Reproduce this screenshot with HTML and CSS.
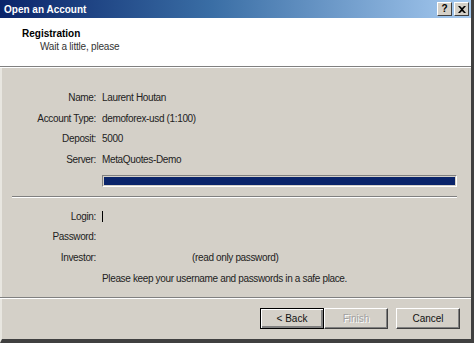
FILE: index.html
```html
<!DOCTYPE html>
<html lang="en">
  <head>
    <meta charset="UTF-8" />
    <title>Open an Account</title>
    <link rel="stylesheet" href="styles.css">
  </head>
  <body>
    <div class="window">
      <div class="titlebar">
        <span class="title">Open an Account</span>
        <div class="title-buttons">
          <button class="cap-btn">?</button>
          <button class="cap-btn">
            <svg width="8" height="7" viewBox="0 0 8 7"><path d="M0 0h2l2 2 2-2h2L5 3.5 8 7H6L4 5 2 7H0l3-3.5z" fill="#000"/></svg>
          </button>
        </div>
      </div>
      <div class="header">
        <h1>Registration</h1>
        <p>Wait a little, please</p>
      </div>
      <div class="content">
        <div class="form-grid">
          <span class="label">Name:</span><span class="value">Laurent Houtan</span>
          <span class="label">Account Type:</span><span class="value">demoforex-usd (1:100)</span>
          <span class="label">Deposit:</span><span class="value">5000</span>
          <span class="label">Server:</span><span class="value">MetaQuotes-Demo</span>
        </div>
        <div class="progress"><div class="progress-fill"></div></div>
        <div class="separator"></div>
        <div class="form-grid login-grid">
          <span class="label">Login:</span><span class="value"><span class="caret"></span></span>
          <span class="label">Password:</span><span class="value"></span>
          <span class="label">Investor:</span><span class="value investor">(read only password)</span>
          <span class="label"></span><span class="value">Please keep your username and passwords in a safe place.</span>
        </div>
      </div>
      <div class="separator footer-sep"></div>
      <div class="footer">
        <button class="btn btn-default">&lt; Back</button>
        <button class="btn" disabled>Finish</button>
        <button class="btn btn-cancel">Cancel</button>
      </div>
    </div>
  </body>
</html>
```

FILE: styles.css
```css
body {
  margin: 0;
  padding: 0;
  font-family: "Liberation Sans", Arial, sans-serif;
  font-size: 10px;
  background-color: #d4d0c8;
}

.window {
  width: 474px;
  height: 343px;
  box-sizing: border-box;
  background-color: #d4d0c8;
  border-left: 2px solid #e8e6e0;
  border-right: 3px solid #404040;
  border-bottom: 4px solid #404040;
  display: flex;
  flex-direction: column;
}

.titlebar {
  height: 18px;
  margin-left: -2px;
  background: linear-gradient(to right, #0a246a, #3a6ea5 45%, #a6caf0);
  display: flex;
  align-items: center;
  justify-content: space-between;
  padding: 0 2px 0 4px;
}

.title {
  color: white;
  font-weight: bold;
  font-size: 10px;
}

.title-buttons {
  display: flex;
  gap: 2px;
}

.cap-btn {
  width: 15px;
  height: 14px;
  padding: 0;
  background-color: #d4d0c8;
  border: 1px solid;
  border-color: #fff #404040 #404040 #fff;
  font-family: "Liberation Sans", Arial, sans-serif;
  font-weight: bold;
  font-size: 10px;
  line-height: 12px;
  display: flex;
  align-items: center;
  justify-content: center;
}

.header {
  height: 49px;
  margin-left: -2px;
  background-color: white;
  border-bottom: 1px solid #808080;
  box-shadow: 0 1px 0 #fff;
  padding-left: 22px;
  box-sizing: border-box;
  padding-top: 10px;
}

.header h1 {
  margin: 0;
  font-size: 10px;
  font-weight: bold;
  color: #000;
  line-height: 12px;
}

.header p {
  margin: 1px 0 0 18px;
  color: #333;
  line-height: 12px;
  letter-spacing: -0.2px;
}

.content {
  padding: 20px 14px 0 10px;
}

.form-grid {
  display: grid;
  grid-template-columns: 84px 1fr;
  column-gap: 6px;
  grid-auto-rows: 20.7px;
  align-items: center;
  letter-spacing: -0.35px;
}

.label {
  text-align: right;
  color: #222;
}

.value {
  color: #222;
}

.progress {
  margin: 5px 0 0 90px;
  height: 12px;
  box-sizing: border-box;
  border: 1px solid;
  border-color: #808080 #fff #fff #808080;
  padding: 1px;
  background-color: #d4d0c8;
}

.progress-fill {
  height: 100%;
  background-color: #0a246a;
}

.separator {
  height: 1px;
  background-color: #808080;
  border-bottom: 1px solid #fff;
}

.content .separator {
  margin: 9px 0 0 0;
}

.login-grid {
  margin-top: 8px;
}

.caret {
  display: inline-block;
  width: 1px;
  height: 11px;
  background-color: #000;
  vertical-align: middle;
}

.investor {
  padding-left: 90px;
}

.footer-sep {
  margin-top: 8px;
  margin-left: -2px;
}

.footer {
  display: flex;
  justify-content: flex-end;
  padding: 9px 11px 0 0;
}

.btn {
  width: 64px;
  height: 21px;
  background-color: #d4d0c8;
  border: 1px solid;
  border-color: #fff #404040 #404040 #fff;
  box-shadow: inset -1px -1px 0 #808080;
  font-family: "Liberation Sans", Arial, sans-serif;
  font-size: 10px;
  color: #111;
  padding: 0;
}

.btn:disabled {
  color: #a0a0a0;
  text-shadow: 1px 1px 0 #fff;
}

.btn-default {
  border: 1px solid #000;
  box-shadow: inset 1px 1px 0 #fff, inset -2px -2px 0 #808080;
}

.btn-cancel {
  margin-left: 8px;
}
```
